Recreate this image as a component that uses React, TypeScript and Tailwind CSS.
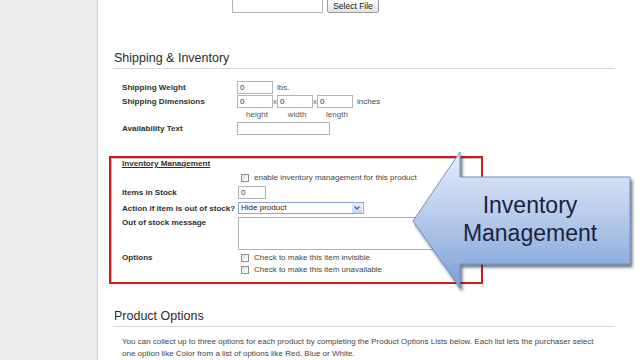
import React from "react";

function Box({ className = "", children }: { className?: string; children?: React.ReactNode }) {
  return (
    <div className={`border border-[#b4b4b4] bg-white text-[8px] leading-[11px] text-[#333] pl-[2px] ${className}`}>
      {children}
    </div>
  );
}

function Check() {
  return (
    <span className="inline-block w-[8px] h-[8px] border border-[#8e8e8e] bg-gradient-to-br from-[#e2e2e2] to-white shrink-0" />
  );
}

function Label({ children, className = "" }: { children: React.ReactNode; className?: string }) {
  return (
    <div className={`text-[8.1px] font-bold text-[#2f2f2f] leading-[11px] whitespace-nowrap ${className}`}>{children}</div>
  );
}

function Arrow() {
  return (
    <div className="absolute left-[408px] top-[147px] w-[232px] h-[150px]">
      <svg width="232" height="150" viewBox="0 0 232 150">
        <defs>
          <linearGradient id="ag" x1="0" y1="0" x2="0" y2="1">
            <stop offset="0" stopColor="#e4ecf8" />
            <stop offset="0.45" stopColor="#b9cdec" />
            <stop offset="1" stopColor="#7c9fd7" />
          </linearGradient>
          <filter id="sh" x="-10%" y="-10%" width="130%" height="130%">
            <feDropShadow dx="2" dy="3" stdDeviation="1.6" floodColor="#1a1a1a" floodOpacity="0.6" />
          </filter>
        </defs>
        <polygon
          points="5,74 52,5 52,30 222,30 222,117 52,117 52,141"
          fill="url(#ag)"
          stroke="#6d8fc6"
          strokeWidth="1"
          filter="url(#sh)"
        />
      </svg>
      <div className="absolute left-[52px] top-[44px] w-[140px] text-center text-[23px] leading-[28px] text-[#1b2240]">
        Inventory
        <br />
        Management
      </div>
    </div>
  );
}

export default function App() {
  return (
    <div className="relative w-[640px] h-[360px] overflow-hidden flex bg-white font-['Liberation_Sans',Arial,sans-serif] text-[#333]">
      <aside className="w-[98px] shrink-0 bg-[#ececec] border-r border-[#cfcfcf]" />
      <main className="flex-1 flex flex-col">
        <div className="-mt-[1px] h-[14px] flex items-center gap-[4px] pl-[134px]">
          <Box className="w-[91px] h-[14px]" />
          <button className="w-[52px] h-[14px] border border-[#9c9c9c] rounded-[2px] bg-gradient-to-b from-white to-[#e2e2e2] text-[8.5px] leading-[12px] text-[#222]">
            Select File
          </button>
        </div>

        <h2 className="mt-[38px] h-[14px] leading-[14px] text-[12.5px] pl-[16px] text-[#2a2a2a]">Shipping &amp; Inventory</h2>
        <div className="mt-[3px] ml-[15px] w-[502px] h-[1px] bg-[#d8d8d8]" />

        <div className="mt-[12px] h-[13px] grid grid-cols-[115px_1fr] pl-[24px] items-center">
          <Label>Shipping Weight</Label>
          <div className="flex items-center">
            <Box className="w-[36px] h-[13px]">0</Box>
            <span className="ml-[4px] text-[8px] text-[#555]">lbs.</span>
          </div>
        </div>

        <div className="mt-[1px] h-[13px] grid grid-cols-[115px_1fr] pl-[24px] items-center">
          <Label>Shipping Dimensions</Label>
          <div className="flex items-center text-[8px] text-[#666]">
            <Box className="w-[36px] h-[13px]">0</Box>
            <span className="w-[4px] text-center">x</span>
            <Box className="w-[36px] h-[13px]">0</Box>
            <span className="w-[4px] text-center">x</span>
            <Box className="w-[36px] h-[13px]">0</Box>
            <span className="ml-[4px] text-[#444]">inches</span>
          </div>
        </div>
        <div className="h-[13px] grid grid-cols-[115px_1fr] pl-[24px] items-center">
          <span />
          <div className="flex text-[8px] text-[#555]">
            <span className="w-[40px] text-center">height</span>
            <span className="w-[40px] text-center">width</span>
            <span className="w-[40px] text-center">length</span>
          </div>
        </div>

        <div className="mt-[1px] h-[13px] grid grid-cols-[115px_1fr] pl-[24px] items-center">
          <Label>Availability Text</Label>
          <Box className="w-[93px] h-[13px]" />
        </div>

        <section className="mt-[21px] ml-[11px] w-[374px] h-[128px] border-2 border-[#cf1b1b]">
          <div className="h-full border-t border-l border-[#bcbcbc] pl-[10px]">
            <div className="h-[10px] text-[8.1px] leading-[10px] font-bold underline text-[#2f2f2f]">Inventory Management</div>
            <div className="mt-[3px] h-[10px] grid grid-cols-[116px_1fr] items-center">
              <span />
              <div className="flex items-center gap-[5px] pl-[3px] text-[8px] text-[#444] whitespace-nowrap">
                <Check />
                enable inventory management for this product
              </div>
            </div>
            <div className="mt-[4px] h-[13px] grid grid-cols-[116px_1fr] items-center">
              <Label>Items in Stock</Label>
              <Box className="w-[28px] h-[13px]">0</Box>
            </div>
            <div className="mt-[3px] h-[12px] grid grid-cols-[116px_1fr] items-center">
              <Label>Action if item is out of stock?</Label>
              <div className="w-[126px] h-[12px] border border-[#8fa6c8] bg-white flex items-center justify-between text-[8px] text-[#222] pl-[2px]">
                Hide product
                <span className="w-[10px] h-[10px] mr-[1px] bg-gradient-to-b from-[#e8eefa] to-[#c6d6f0] flex items-center justify-center">
                  <svg width="6" height="4" viewBox="0 0 6 4">
                    <path d="M0.5 0.5 L3 3 L5.5 0.5" fill="none" stroke="#3b5c9a" strokeWidth="1.2" />
                  </svg>
                </span>
              </div>
            </div>
            <div className="mt-[3px] h-[33px] grid grid-cols-[116px_1fr] items-start">
              <Label>Out of stock message</Label>
              <Box className="w-[232px] h-[33px]" />
            </div>
            <div className="mt-[2px] grid grid-cols-[116px_1fr] items-start">
              <Label>Options</Label>
              <div className="flex flex-col pl-[3px] text-[8px] text-[#444]">
                <div className="h-[12px] flex items-center gap-[5px]">
                  <Check />
                  Check to make this item invisible
                </div>
                <div className="h-[12px] flex items-center gap-[5px]">
                  <Check />
                  Check to make this item unavailable
                </div>
              </div>
            </div>
          </div>
        </section>

        <h2 className="mt-[25px] h-[14px] leading-[14px] text-[12.5px] pl-[16px] text-[#2a2a2a]">Product Options</h2>
        <div className="mt-[3px] ml-[15px] w-[502px] h-[1px] bg-[#d8d8d8]" />
        <p className="mt-[9px] pl-[24px] text-[8px] leading-[12px] text-[#444] whitespace-nowrap">
          You can collect up to three options for each product by completing the Product Options Lists below. Each list lets the purchaser select
          <br />
          one option like Color from a list of options like Red, Blue or White.
        </p>
      </main>
      <Arrow />
    </div>
  );
}
